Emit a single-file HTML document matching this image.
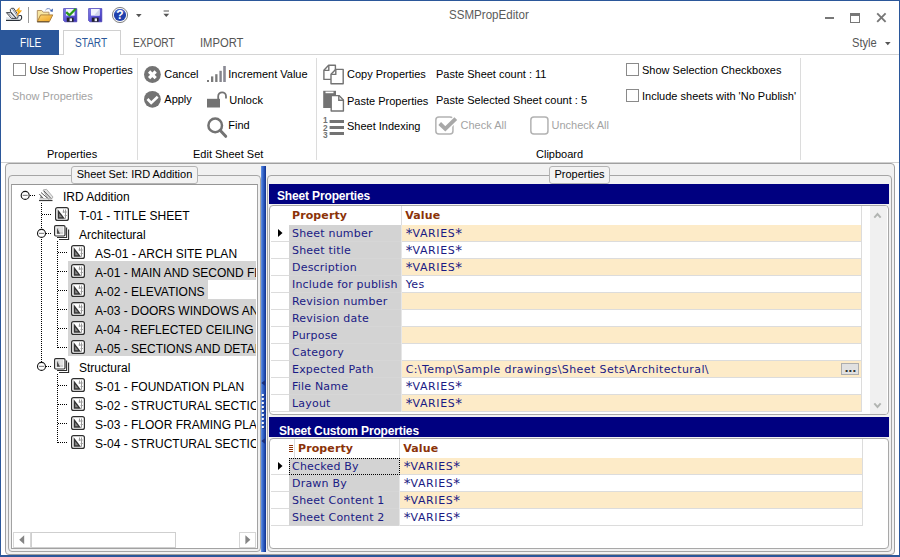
<!DOCTYPE html>
<html lang="en">
<head>
<meta charset="utf-8">
<title>SSMPropEditor</title>
<style>
*{box-sizing:border-box;margin:0;padding:0}
html,body{width:900px;height:557px;overflow:hidden;background:#fff}
body{position:relative;font-family:"Liberation Sans",Arial,sans-serif;font-size:11px;color:#000}
div,svg{position:absolute}
.as{font-size:13.5px;line-height:0;position:relative;top:1px;letter-spacing:0}
svg{overflow:visible}
#win{left:0;top:0;width:900px;height:557px;border:1px solid #2b579a;border-bottom-width:2px;pointer-events:none}
#tabline{left:1px;top:54px;width:898px;height:1px;background:#d4d4d4}
#filetab{left:0;top:30px;width:59px;height:25px;background:#2b579a}
#starttab{left:63px;top:30px;width:58px;height:25px;background:#fff;border:1px solid #d0d0d0;border-bottom:none}
.tabtxt{top:36px;font-size:12px;line-height:15px;color:#555;white-space:pre;transform-origin:0 0;transform:scaleX(.84)}
#ribline{left:1px;top:162px;width:898px;height:1px;background:#d0d0d0}
.sep{top:58px;width:1px;height:102px;background:#dcdcdc}
.rt{white-space:pre;font-size:11px;line-height:14px;height:14px;color:#000}
.dis{color:#a3a3a3}
.cb{width:13px;height:13px;border:1px solid #8a8a8a;background:#fff}
.gl{top:147px;font-size:11px;line-height:14px;white-space:pre}
/* lower */
#outer{left:5px;top:163px;width:890px;height:392px;border:1px solid #a0a0a0;border-radius:4px;background:#f1f1f1}
.grp{border:1px solid #a6a6a6;border-radius:4px;background:#f1f1f1}
.lbl{height:18px;top:166px;border:1px solid #b4b4b4;border-radius:3px;background:#f3f3f3;font-size:11px;line-height:14px;text-align:center;white-space:pre}
#tree{left:11px;top:184px;width:247px;height:365px;border:1px solid #a2a2a2;border-top-color:#969696;background:#fff;overflow:hidden}
.tr{left:0;height:19px;font-size:12px;line-height:19px;white-space:pre}
.hl{background:#d4d4d4;height:19px}
.navy{left:269px;width:620px;height:20px;background:#000080;color:#fff;font-weight:bold;font-size:12px;white-space:pre;letter-spacing:-.15px}
.grid{left:269px;width:620px;border:1px solid #a8a8a8;border-radius:4px;background:#fff;overflow:hidden}
.gt{font-family:"DejaVu Sans",Verdana,sans-serif;font-size:11px;line-height:17px;height:17px;white-space:pre;color:#1a1a84;letter-spacing:.2px}
.gv{letter-spacing:.4px}
.gv.va{letter-spacing:.62px}
.gh{font-family:"DejaVu Sans",Verdana,sans-serif;font-weight:bold;font-size:11px;line-height:17px;height:17px;white-space:pre;color:#8b3208;letter-spacing:.1px}
.pc{background:#d3d3d3}
.alt{background:#fdebc8}
.hline{height:1px;background:#dcdcdc}
.vline{width:1px;background:#dcdcdc}
</style>
</head>
<body>
<div id="tabline"></div><div id="ribline"></div>
<div id="filetab"></div><div id="starttab"></div>
<div class="tabtxt" style="left:20px;color:#fff">FILE</div>
<div class="tabtxt" style="left:75px;color:#2b579a">START</div>
<div class="tabtxt" style="left:133.3px;transform:scaleX(.85)">EXPORT</div>
<div class="tabtxt" style="left:200.2px;transform:scaleX(.935)">IMPORT</div>
<div class="tabtxt" style="left:852px;transform:scaleX(.93)">Style</div>
<div class="tabtxt" style="left:449px;top:8px;transform:scaleX(.965);color:#5a5a5a">SSMPropEditor</div>
<!-- app icon -->
<svg style="left:5px;top:6px" width="18" height="17" viewBox="5 6 18 17"><path d="M6 17.2H19.5V19.3H6Z" fill="#e1e6ee"/><path d="M6 20.4H19.2C21 20.2 21.9 18.6 21.6 16.8C21.4 15.5 20.2 15.2 19 15.7" fill="none" stroke="#2a3038" stroke-width="1.1"/><path d="M6.4 12.6H10.6L16 18.4H11.4Z" fill="#f4f6f9" stroke="#2a3038" stroke-width="0.9"/><path d="M8.2 12.8L13.4 18.3" stroke="#2a3038" stroke-width="0.8" stroke-dasharray="1 0.8"/><path d="M10.4 9.3L11.4 8.3H13.8L18.4 15.6L17.6 18.2H16.2L10.4 11.4Z" fill="#eef2f8" stroke="#2a3038" stroke-width="0.9"/><path d="M12.4 8.8L17.4 16.4" stroke="#6a7280" stroke-width="0.7"/><path d="M19.6 6.9L15.2 11.2L17.9 11.4L16.5 16.7L22.1 10.4L19.4 10.2Z" fill="#f4a01c"/><path d="M18.7 9.2L17.2 10.9L19.2 11.1L18.2 13.4L20.3 10.8L18.7 10.6Z" fill="#ffe020"/></svg>
<div style="left:28px;top:7px;width:1px;height:16px;background:#9a9a9a"></div>
<!-- open folder -->
<svg style="left:36px;top:7px" width="18" height="16" viewBox="0 0 18 16"><defs><linearGradient id="fg" x1="0" y1="0" x2="1" y2="1"><stop offset="0" stop-color="#fbd678"/><stop offset="1" stop-color="#f0a21c"/></linearGradient><linearGradient id="fl" x1="0" y1="0" x2="1" y2="1"><stop offset="0" stop-color="#8884ea"/><stop offset=".5" stop-color="#5f58da"/><stop offset="1" stop-color="#3c32b4"/></linearGradient></defs><path d="M1.3 14.4V3.5H5.8L7.2 5.2H13V8" fill="#f8e6a0" stroke="#b4946a" stroke-width="1"/><path d="M1.3 14.6L4.6 7.9H16.8L13.4 14.6Z" fill="url(#fg)" stroke="#a87a38" stroke-width="0.9" stroke-linejoin="round"/><path d="M1.2 14.9H13.2" stroke="#4a3a20" stroke-width="0.9"/><path d="M9.6 3C10.8 1.2 13.6 1 15.2 3.2" fill="none" stroke="#4a68b0" stroke-width="1" stroke-dasharray="1.4 0.6"/><path d="M17 1.6L16.6 5L13.6 4Z" fill="#3a5fb0"/></svg>
<!-- save + check -->
<svg style="left:63px;top:8px" width="15" height="15" viewBox="0 0 15 15"><path d="M0.6 0.6H13.8V13.8H1.8L0.6 12.6Z" fill="url(#fl)" stroke="#4038b0" stroke-width="0.7"/><rect x="3" y="1" width="8.6" height="6.6" fill="#f2f4fc"/><rect x="3.8" y="9.6" width="6.8" height="4.2" fill="#22222e"/><rect x="6.6" y="10.4" width="2.4" height="2.8" fill="#eeeef6"/><path d="M3.2 4.2L6.4 7.2L12.8 0.8" fill="none" stroke="#2a9a18" stroke-width="2.3"/></svg>
<!-- save -->
<svg style="left:88px;top:8px" width="15" height="15" viewBox="0 0 15 15"><path d="M0.6 0.6H13.8V13.8H1.8L0.6 12.6Z" fill="url(#fl)" stroke="#4038b0" stroke-width="0.7"/><rect x="3" y="1" width="8.6" height="6.6" fill="#f2f4fc"/><path d="M11.6 1V7.6H6Z" fill="#d0d6ec"/><rect x="3.8" y="9.6" width="6.8" height="4.2" fill="#22222e"/><rect x="6.6" y="10.4" width="2.4" height="2.8" fill="#eeeef6"/></svg>
<!-- help -->
<svg style="left:111px;top:6px" width="18" height="18" viewBox="0 0 18 18"><circle cx="9" cy="9" r="7.6" fill="#f6f6f6" stroke="#858585" stroke-width="1"/><circle cx="9" cy="9" r="6.1" fill="#2040ac"/><path d="M3.6 6.8A5.8 5.8 0 0 1 14.4 6.8A9 5 0 0 0 3.6 6.8Z" fill="#4a68cc"/><text x="9" y="13.4" font-family="Liberation Sans,sans-serif" font-size="12" font-weight="bold" fill="#fff" text-anchor="middle">?</text></svg>
<svg style="left:136px;top:14px" width="6" height="4" viewBox="0 0 6 4"><path d="M0 0H5.6L2.8 3.2Z" fill="#555"/></svg>
<svg style="left:163px;top:10px" width="7" height="8" viewBox="0 0 7 8"><path d="M0.6 1H6" stroke="#555" stroke-width="1"/><path d="M0.4 3.8H6.2L3.3 7Z" fill="#555"/></svg>

<div style="left:825px;top:17px;width:9px;height:2px;background:#777"></div>
<div style="left:850px;top:13px;width:10px;height:10px;border:1px solid #777;border-top-width:3px"></div>
<svg style="left:876px;top:12px" width="11" height="11" viewBox="0 0 11 11"><path d="M1.2 1.4L9.6 9.8M9.6 1.4L1.2 9.8" stroke="#777" stroke-width="1.9"/></svg>
<svg style="left:885px;top:42px" width="6" height="4" viewBox="0 0 6 4"><path d="M0 0H5.6L2.8 3.2Z" fill="#555"/></svg>

<div class="sep" style="left:137px"></div>
<div class="sep" style="left:316px"></div>
<div class="sep" style="left:800px"></div>
<div class="cb" style="left:13px;top:63px"></div>
<div class="rt " style="left:29.5px;top:63px">Use Show Properties</div>
<div class="rt dis" style="left:12px;top:89px">Show Properties</div>
<div class="rt " style="left:164.3px;top:67px">Cancel</div>
<div class="rt " style="left:164.3px;top:92px">Apply</div>
<div class="rt " style="left:228.3px;top:67px">Increment Value</div>
<div class="rt " style="left:229.3px;top:92.5px">Unlock</div>
<div class="rt " style="left:228.3px;top:118px">Find</div>
<div class="rt " style="left:347px;top:67px">Copy Properties</div>
<div class="rt " style="left:347px;top:93.5px">Paste Properties</div>
<div class="rt " style="left:347px;top:119px">Sheet Indexing</div>
<div class="rt " style="left:436px;top:67px">Paste Sheet count : 11</div>
<div class="rt " style="left:436px;top:93px">Paste Selected Sheet count : 5</div>
<div class="rt dis" style="left:460.5px;top:118px">Check All</div>
<div class="rt dis" style="left:551.5px;top:118px">Uncheck All</div>
<div class="cb" style="left:626px;top:63px"></div>
<div class="cb" style="left:626px;top:89px"></div>
<div class="rt " style="left:642px;top:63px">Show Selection Checkboxes</div>
<div class="rt " style="left:642px;top:89px">Include sheets with 'No Publish'</div>
<div class="gl" style="left:47px">Properties</div>
<div class="gl" style="left:193px">Edit Sheet Set</div>
<div class="gl" style="left:536px">Clipboard</div>
<!-- cancel -->
<svg style="left:144px;top:66px" width="17" height="17" viewBox="0 0 17 17"><circle cx="8.4" cy="8.5" r="8.4" fill="#737373"/><path d="M5.1 5.5L11.7 12.1M11.7 5.5L5.1 12.1" stroke="#fff" stroke-width="3.2"/></svg>
<!-- apply -->
<svg style="left:144px;top:91px" width="17" height="17" viewBox="0 0 17 17"><circle cx="8.4" cy="8.3" r="8.4" fill="#737373"/><path d="M3.5 8L7.2 12L13.7 5.8" fill="none" stroke="#fff" stroke-width="2.6" stroke-linejoin="miter"/></svg>
<!-- increment -->
<svg style="left:206px;top:65px" width="21" height="18" viewBox="0 0 21 18"><g fill="#7a7a7a"><rect x="1" y="15" width="2" height="2"/><rect x="5" y="11.4" width="2.3" height="5.6"/><rect x="9.2" y="9.2" width="2.3" height="7.8"/><rect x="13.4" y="5.8" width="2.4" height="11.2" fill="#84848c"/><rect x="17.2" y="1" width="2.6" height="16" fill="#8a8a94"/></g></svg>
<!-- unlock -->
<svg style="left:206px;top:90px" width="22" height="19" viewBox="0 0 22 19"><rect x="1" y="8.8" width="13" height="8.7" fill="#737373"/><path d="M12.2 9V6.2A3.9 3.9 0 0 1 20 6.2V8.6" fill="none" stroke="#737373" stroke-width="1.8"/></svg>
<!-- find -->
<svg style="left:206px;top:116px" width="22" height="20" viewBox="0 0 22 20"><circle cx="9.2" cy="9.4" r="6.8" fill="none" stroke="#737373" stroke-width="2.5"/><path d="M14.3 14.5L19.7 20.3" stroke="#737373" stroke-width="3" stroke-linecap="round"/></svg>
<!-- copy -->
<svg style="left:322px;top:63px" width="23" height="22" viewBox="0 0 23 22"><g fill="#fff" stroke="#737373" stroke-width="1.4" stroke-linejoin="round"><path d="M1.9 7.2L6.6 2.2H13.4V16.4H1.9Z"/><path d="M1.9 7.4H6.8V2.4" fill="none"/><path d="M9 11.2L13.6 6.4H21.2V20.7H9Z"/><path d="M9 11.4H13.8V6.6" fill="none"/></g></svg>
<!-- paste -->
<svg style="left:322px;top:89px" width="23" height="23" viewBox="0 0 23 23"><rect x="1.2" y="1.8" width="12.8" height="17.2" fill="#737373"/><rect x="3.5" y="2.6" width="8" height="1.6" fill="#fff"/><path d="M9.2 6.6H17L21.4 11V22H9.2Z" fill="#fff" stroke="#737373" stroke-width="1.4" stroke-linejoin="round"/><path d="M16.8 6.8V11.2H21.2" fill="none" stroke="#737373" stroke-width="1.4"/></svg>
<!-- indexing -->
<svg style="left:321px;top:116px" width="24" height="21" viewBox="0 0 24 21"><g fill="#737373"><rect x="8.6" y="4" width="14.4" height="3"/><rect x="8.6" y="10" width="14.4" height="3"/><rect x="8.6" y="16" width="14.4" height="3"/></g><g font-family="Liberation Sans,sans-serif" font-size="8.3" font-weight="bold" fill="#727272"><text x="2" y="6.8">1</text><text x="2" y="14.5">2</text><text x="2" y="21.8">3</text></g></svg>
<!-- check all -->
<svg style="left:434px;top:114px" width="26" height="22" viewBox="0 0 26 22"><rect x="1.85" y="2.95" width="17.1" height="17.1" rx="3" fill="#fff" stroke="#b2b2b2" stroke-width="1.5"/><path d="M13.5 12.7L21.8 4.6" fill="none" stroke="#fff" stroke-width="6.4"/><path d="M5.7 9.5L11.3 14.8L21.8 4.6" fill="none" stroke="#a8a8a8" stroke-width="3.9"/></svg>
<!-- uncheck all -->
<svg style="left:529px;top:114px" width="22" height="22" viewBox="0 0 22 22"><rect x="1.85" y="2.95" width="17.1" height="17.1" rx="3" fill="#fff" stroke="#b2b2b2" stroke-width="1.5"/></svg>

<div id="outer"></div>
<div class="grp" style="left:8px;top:175px;width:253px;height:377px"></div>
<div class="grp" style="left:267px;top:175px;width:625px;height:377px"></div>
<div class="lbl" style="left:71px;width:127px">Sheet Set: IRD Addition</div>
<div class="lbl" style="left:549px;width:61px">Properties</div>
<div style="left:261px;top:166px;width:5px;height:386px;background:linear-gradient(90deg,#6a98e4 0,#3f6fd0 30%,#2450b4 65%,#0f2f8c 100%)"></div>
<svg style="left:261px;top:379.8px" width="5" height="6" viewBox="0 0 5 6"><path d="M4 0.2V5.8L0.4 3Z" fill="#1c2f78"/></svg>
<svg style="left:261px;top:437.5px" width="5" height="6" viewBox="0 0 5 6"><path d="M4 0.2V5.8L0.4 3Z" fill="#1c2f78"/></svg>
<svg style="left:261px;top:392px" width="5" height="40" viewBox="0 0 5 40"><rect x="1.6" y="2.8" width="2" height="2" fill="#1c2f78"/><rect x="0.8" y="2" width="2" height="2" fill="#fff"/><rect x="1.6" y="6.8" width="2" height="2" fill="#1c2f78"/><rect x="0.8" y="6" width="2" height="2" fill="#fff"/><rect x="1.6" y="10.8" width="2" height="2" fill="#1c2f78"/><rect x="0.8" y="10" width="2" height="2" fill="#fff"/><rect x="1.6" y="14.8" width="2" height="2" fill="#1c2f78"/><rect x="0.8" y="14" width="2" height="2" fill="#fff"/><rect x="1.6" y="18.8" width="2" height="2" fill="#1c2f78"/><rect x="0.8" y="18" width="2" height="2" fill="#fff"/><rect x="1.6" y="22.8" width="2" height="2" fill="#1c2f78"/><rect x="0.8" y="22" width="2" height="2" fill="#fff"/><rect x="1.6" y="26.8" width="2" height="2" fill="#1c2f78"/><rect x="0.8" y="26" width="2" height="2" fill="#fff"/><rect x="1.6" y="30.8" width="2" height="2" fill="#1c2f78"/><rect x="0.8" y="30" width="2" height="2" fill="#fff"/><rect x="1.6" y="34.8" width="2" height="2" fill="#1c2f78"/><rect x="0.8" y="34" width="2" height="2" fill="#fff"/></svg>
<div id="tree">
<div class="tr" style="left:51px;top:3px">IRD Addition</div>
<div class="tr" style="left:67px;top:22px">T-01 - TITLE SHEET</div>
<div class="tr" style="left:67px;top:41px">Architectural</div>
<div class="tr" style="left:83px;top:60px">AS-01 - ARCH SITE PLAN</div>
<div class="hl" style="left:56px;top:76px;width:200px"></div>
<div class="tr" style="left:83px;top:79px">A-01 - MAIN AND SECOND FLOOR PLAN</div>
<div class="hl" style="left:56px;top:95px;width:140px"></div>
<div class="tr" style="left:83px;top:98px">A-02 - ELEVATIONS</div>
<div class="hl" style="left:56px;top:114px;width:200px"></div>
<div class="tr" style="left:83px;top:117px">A-03 - DOORS WINDOWS AND SCHEDULES</div>
<div class="hl" style="left:56px;top:133px;width:200px"></div>
<div class="tr" style="left:83px;top:136px">A-04 - REFLECTED CEILING PLAN</div>
<div class="hl" style="left:56px;top:152px;width:200px"></div>
<div class="tr" style="left:83px;top:155px">A-05 - SECTIONS AND DETAILS</div>
<div class="tr" style="left:67px;top:174px">Structural</div>
<div class="tr" style="left:83px;top:193px">S-01 - FOUNDATION PLAN</div>
<div class="tr" style="left:83px;top:212px">S-02 - STRUCTURAL SECTIONS</div>
<div class="tr" style="left:83px;top:231px">S-03 - FLOOR FRAMING PLAN</div>
<div class="tr" style="left:83px;top:250px">S-04 - STRUCTURAL SECTIONS 2</div>
<div style="left:244px;top:0;width:2px;height:346px;background:#fff"></div>
<svg style="left:0;top:0" width="246" height="362" viewBox="12 185 246 362">
<path d="M41.5 203V229" stroke="#000" stroke-width="1" stroke-dasharray="1 1" shape-rendering="crispEdges" fill="none"/>
<path d="M41.5 239V362" stroke="#000" stroke-width="1" stroke-dasharray="1 1" shape-rendering="crispEdges" fill="none"/>
<path d="M30 195.5H36" stroke="#000" stroke-width="1" stroke-dasharray="1 1" shape-rendering="crispEdges" fill="none"/>
<path d="M42 214.5H52" stroke="#000" stroke-width="1" stroke-dasharray="1 1" shape-rendering="crispEdges" fill="none"/>
<path d="M46 233.5H52" stroke="#000" stroke-width="1" stroke-dasharray="1 1" shape-rendering="crispEdges" fill="none"/>
<path d="M46 366.5H52" stroke="#000" stroke-width="1" stroke-dasharray="1 1" shape-rendering="crispEdges" fill="none"/>
<path d="M57.5 241V348.0" stroke="#000" stroke-width="1" stroke-dasharray="1 1" shape-rendering="crispEdges" fill="none"/>
<path d="M57.5 374.0V443.0" stroke="#000" stroke-width="1" stroke-dasharray="1 1" shape-rendering="crispEdges" fill="none"/>
<path d="M58 252.5H68" stroke="#000" stroke-width="1" stroke-dasharray="1 1" shape-rendering="crispEdges" fill="none"/>
<path d="M58 271.5H68" stroke="#000" stroke-width="1" stroke-dasharray="1 1" shape-rendering="crispEdges" fill="none"/>
<path d="M58 290.5H68" stroke="#000" stroke-width="1" stroke-dasharray="1 1" shape-rendering="crispEdges" fill="none"/>
<path d="M58 309.5H68" stroke="#000" stroke-width="1" stroke-dasharray="1 1" shape-rendering="crispEdges" fill="none"/>
<path d="M58 328.5H68" stroke="#000" stroke-width="1" stroke-dasharray="1 1" shape-rendering="crispEdges" fill="none"/>
<path d="M58 347.5H68" stroke="#000" stroke-width="1" stroke-dasharray="1 1" shape-rendering="crispEdges" fill="none"/>
<path d="M58 385.5H68" stroke="#000" stroke-width="1" stroke-dasharray="1 1" shape-rendering="crispEdges" fill="none"/>
<path d="M58 404.5H68" stroke="#000" stroke-width="1" stroke-dasharray="1 1" shape-rendering="crispEdges" fill="none"/>
<path d="M58 423.5H68" stroke="#000" stroke-width="1" stroke-dasharray="1 1" shape-rendering="crispEdges" fill="none"/>
<path d="M58 442.5H68" stroke="#000" stroke-width="1" stroke-dasharray="1 1" shape-rendering="crispEdges" fill="none"/>
<circle cx="25.2" cy="195.4" r="4" fill="#fff" stroke="#111" stroke-width="1.1"/>
<path d="M22.7 195.4H27.7" stroke="#8a8a8a" stroke-width="1.2"/>
<circle cx="41.5" cy="233.4" r="4" fill="#fff" stroke="#111" stroke-width="1.1"/>
<path d="M39.0 233.4H44.0" stroke="#8a8a8a" stroke-width="1.2"/>
<circle cx="41.5" cy="366.4" r="4" fill="#fff" stroke="#111" stroke-width="1.1"/>
<path d="M39.0 366.4H44.0" stroke="#8a8a8a" stroke-width="1.2"/>
<rect x="55.6" y="207.6" width="12.8" height="12.8" rx="2" fill="#fff" stroke="#2e2e2e" stroke-width="1.2"/>
<path d="M57.7 209.2V218.7H65Z" fill="#343434"/>
<path d="M59.2 213.6V217.3H62.2Z" fill="#8a8a8a"/>
<path d="M62.6 212H66.8M64.6 215.5H66.8M65.5 209.5V218.7M63.5 209.5V212.8" stroke="#9a9a9a" stroke-width="1" fill="none"/>
<rect x="71.6" y="245.6" width="12.8" height="12.8" rx="2" fill="#fff" stroke="#2e2e2e" stroke-width="1.2"/>
<path d="M73.7 247.2V256.7H81Z" fill="#343434"/>
<path d="M75.2 251.6V255.3H78.2Z" fill="#8a8a8a"/>
<path d="M78.6 250.0H82.8M80.6 253.5H82.8M81.5 247.5V256.7M79.5 247.5V250.8" stroke="#9a9a9a" stroke-width="1" fill="none"/>
<rect x="71.6" y="264.6" width="12.8" height="12.8" rx="2" fill="#fff" stroke="#2e2e2e" stroke-width="1.2"/>
<path d="M73.7 266.2V275.7H81Z" fill="#343434"/>
<path d="M75.2 270.6V274.3H78.2Z" fill="#8a8a8a"/>
<path d="M78.6 269.0H82.8M80.6 272.5H82.8M81.5 266.5V275.7M79.5 266.5V269.8" stroke="#9a9a9a" stroke-width="1" fill="none"/>
<rect x="71.6" y="283.6" width="12.8" height="12.8" rx="2" fill="#fff" stroke="#2e2e2e" stroke-width="1.2"/>
<path d="M73.7 285.2V294.7H81Z" fill="#343434"/>
<path d="M75.2 289.6V293.3H78.2Z" fill="#8a8a8a"/>
<path d="M78.6 288.0H82.8M80.6 291.5H82.8M81.5 285.5V294.7M79.5 285.5V288.8" stroke="#9a9a9a" stroke-width="1" fill="none"/>
<rect x="71.6" y="302.6" width="12.8" height="12.8" rx="2" fill="#fff" stroke="#2e2e2e" stroke-width="1.2"/>
<path d="M73.7 304.2V313.7H81Z" fill="#343434"/>
<path d="M75.2 308.6V312.3H78.2Z" fill="#8a8a8a"/>
<path d="M78.6 307.0H82.8M80.6 310.5H82.8M81.5 304.5V313.7M79.5 304.5V307.8" stroke="#9a9a9a" stroke-width="1" fill="none"/>
<rect x="71.6" y="321.6" width="12.8" height="12.8" rx="2" fill="#fff" stroke="#2e2e2e" stroke-width="1.2"/>
<path d="M73.7 323.2V332.7H81Z" fill="#343434"/>
<path d="M75.2 327.6V331.3H78.2Z" fill="#8a8a8a"/>
<path d="M78.6 326.0H82.8M80.6 329.5H82.8M81.5 323.5V332.7M79.5 323.5V326.8" stroke="#9a9a9a" stroke-width="1" fill="none"/>
<rect x="71.6" y="340.6" width="12.8" height="12.8" rx="2" fill="#fff" stroke="#2e2e2e" stroke-width="1.2"/>
<path d="M73.7 342.2V351.7H81Z" fill="#343434"/>
<path d="M75.2 346.6V350.3H78.2Z" fill="#8a8a8a"/>
<path d="M78.6 345.0H82.8M80.6 348.5H82.8M81.5 342.5V351.7M79.5 342.5V345.8" stroke="#9a9a9a" stroke-width="1" fill="none"/>
<rect x="71.6" y="378.6" width="12.8" height="12.8" rx="2" fill="#fff" stroke="#2e2e2e" stroke-width="1.2"/>
<path d="M73.7 380.2V389.7H81Z" fill="#343434"/>
<path d="M75.2 384.6V388.3H78.2Z" fill="#8a8a8a"/>
<path d="M78.6 383.0H82.8M80.6 386.5H82.8M81.5 380.5V389.7M79.5 380.5V383.8" stroke="#9a9a9a" stroke-width="1" fill="none"/>
<rect x="71.6" y="397.6" width="12.8" height="12.8" rx="2" fill="#fff" stroke="#2e2e2e" stroke-width="1.2"/>
<path d="M73.7 399.2V408.7H81Z" fill="#343434"/>
<path d="M75.2 403.6V407.3H78.2Z" fill="#8a8a8a"/>
<path d="M78.6 402.0H82.8M80.6 405.5H82.8M81.5 399.5V408.7M79.5 399.5V402.8" stroke="#9a9a9a" stroke-width="1" fill="none"/>
<rect x="71.6" y="416.6" width="12.8" height="12.8" rx="2" fill="#fff" stroke="#2e2e2e" stroke-width="1.2"/>
<path d="M73.7 418.2V427.7H81Z" fill="#343434"/>
<path d="M75.2 422.6V426.3H78.2Z" fill="#8a8a8a"/>
<path d="M78.6 421.0H82.8M80.6 424.5H82.8M81.5 418.5V427.7M79.5 418.5V421.8" stroke="#9a9a9a" stroke-width="1" fill="none"/>
<rect x="71.6" y="435.6" width="12.8" height="12.8" rx="2" fill="#fff" stroke="#2e2e2e" stroke-width="1.2"/>
<path d="M73.7 437.2V446.7H81Z" fill="#343434"/>
<path d="M75.2 441.6V445.3H78.2Z" fill="#8a8a8a"/>
<path d="M78.6 440.0H82.8M80.6 443.5H82.8M81.5 437.5V446.7M79.5 437.5V440.8" stroke="#9a9a9a" stroke-width="1" fill="none"/>
<path d="M59 239.5H68.6V229.5" fill="none" stroke="#2e2e2e" stroke-width="1.1"/>
<path d="M57 237.5H66.6V227.5" fill="none" stroke="#2e2e2e" stroke-width="1.1"/>
<rect x="54.6" y="225.6" width="10.4" height="10.4" rx="1.2" fill="#fff" stroke="#2e2e2e" stroke-width="1.2"/>
<rect x="56.4" y="227.4" width="6.8" height="6.8" fill="#d0d0d0"/>
<path d="M57 228V233.8H60Z" fill="#4a4a4a"/>
<path d="M59 229H63M59.5 231H63" stroke="#f4f4f4" stroke-width="1"/>
<path d="M59 372.5H68.6V362.5" fill="none" stroke="#2e2e2e" stroke-width="1.1"/>
<path d="M57 370.5H66.6V360.5" fill="none" stroke="#2e2e2e" stroke-width="1.1"/>
<rect x="54.6" y="358.6" width="10.4" height="10.4" rx="1.2" fill="#fff" stroke="#2e2e2e" stroke-width="1.2"/>
<rect x="56.4" y="360.4" width="6.8" height="6.8" fill="#d0d0d0"/>
<path d="M57 361V366.8H60Z" fill="#4a4a4a"/>
<path d="M59 362H63M59.5 364H63" stroke="#f4f4f4" stroke-width="1"/>
<path d="M39 200.5H52.5" stroke="#3a3a3a" stroke-width="1.2"/>
<path d="M43 190L46.5 189.3L53 197L51.5 199L48 198.8Z" fill="#e4e4e4" stroke="#a0a0a0" stroke-width="0.8"/>
<path d="M39.3 194L43.5 198.5M41 192.5L48.5 199M44 191L51 198.5" stroke="#5a5a5a" stroke-width="1" fill="none"/>
<path d="M39.5 198.8H51" stroke="#bdbdbd" stroke-width="1"/>
<path d="M41 195.5L43 198L40 197.8Z" fill="#707070"/>
</svg>
<div style="left:1px;top:347px;width:18px;height:16px;background:#fff;border:1px solid #d6d6d6"></div>
<div style="left:19px;top:347px;width:145px;height:16px;background:#fff;border:1px solid #cfcfcf"></div>
<div style="left:227px;top:347px;width:17px;height:16px;background:#fff;border:1px solid #d6d6d6"></div>
<svg style="left:7px;top:350px" width="6" height="10"><path d="M5.2 0.3V9.3L0.2 4.8Z" fill="#858585"/></svg>
<svg style="left:233px;top:350px" width="6" height="10"><path d="M0.4 0.3V9.3L5.4 4.8Z" fill="#858585"/></svg>
</div>
<div class="navy" style="top:184px;line-height:24px;padding-left:8px">Sheet Properties</div>
<div class="navy" style="top:417px;line-height:28px;padding-left:10px">Sheet Custom Properties</div>
<div class="grid" style="top:205px;height:210px">
<div class="gh" style="left:22px;top:1px">Property</div>
<div class="gh" style="left:135.3px;top:1px">Value</div>
<div class="vline" style="left:131px;top:0;height:19px"></div>
<div class="alt" style="left:132px;top:19px;width:459px;height:16px"></div>
<div class="hline" style="left:1px;top:35px;width:591px"></div>
<div class="pc" style="left:19px;top:19px;width:112px;height:17px;border-bottom:1px solid #d6d6d6"></div>
<div class="gt" style="left:22px;top:19px">Sheet number</div>
<div class="gt gv va" style="left:135.7px;top:19px"><span class="as">*</span>VARIES<span class="as">*</span></div>
<div class="hline" style="left:1px;top:52px;width:591px"></div>
<div class="pc" style="left:19px;top:36px;width:112px;height:17px;border-bottom:1px solid #d6d6d6"></div>
<div class="gt" style="left:22px;top:36px">Sheet title</div>
<div class="gt gv va" style="left:135.7px;top:36px"><span class="as">*</span>VARIES<span class="as">*</span></div>
<div class="alt" style="left:132px;top:53px;width:459px;height:16px"></div>
<div class="hline" style="left:1px;top:69px;width:591px"></div>
<div class="pc" style="left:19px;top:53px;width:112px;height:17px;border-bottom:1px solid #d6d6d6"></div>
<div class="gt" style="left:22px;top:53px">Description</div>
<div class="gt gv va" style="left:135.7px;top:53px"><span class="as">*</span>VARIES<span class="as">*</span></div>
<div class="hline" style="left:1px;top:86px;width:591px"></div>
<div class="pc" style="left:19px;top:70px;width:112px;height:17px;border-bottom:1px solid #d6d6d6"></div>
<div class="gt" style="left:22px;top:70px">Include for publish</div>
<div class="gt gv" style="left:135.7px;top:70px">Yes</div>
<div class="alt" style="left:132px;top:87px;width:459px;height:16px"></div>
<div class="hline" style="left:1px;top:103px;width:591px"></div>
<div class="pc" style="left:19px;top:87px;width:112px;height:17px;border-bottom:1px solid #d6d6d6"></div>
<div class="gt" style="left:22px;top:87px">Revision number</div>
<div class="hline" style="left:1px;top:120px;width:591px"></div>
<div class="pc" style="left:19px;top:104px;width:112px;height:17px;border-bottom:1px solid #d6d6d6"></div>
<div class="gt" style="left:22px;top:104px">Revision date</div>
<div class="alt" style="left:132px;top:121px;width:459px;height:16px"></div>
<div class="hline" style="left:1px;top:137px;width:591px"></div>
<div class="pc" style="left:19px;top:121px;width:112px;height:17px;border-bottom:1px solid #d6d6d6"></div>
<div class="gt" style="left:22px;top:121px">Purpose</div>
<div class="hline" style="left:1px;top:154px;width:591px"></div>
<div class="pc" style="left:19px;top:138px;width:112px;height:17px;border-bottom:1px solid #d6d6d6"></div>
<div class="gt" style="left:22px;top:138px">Category</div>
<div class="alt" style="left:132px;top:155px;width:459px;height:16px"></div>
<div class="hline" style="left:1px;top:171px;width:591px"></div>
<div class="pc" style="left:19px;top:155px;width:112px;height:17px;border-bottom:1px solid #d6d6d6"></div>
<div class="gt" style="left:22px;top:155px">Expected Path</div>
<div class="gt gv" style="left:135.7px;top:155px">C:\Temp\Sample drawings\Sheet Sets\Architectural\</div>
<div class="hline" style="left:1px;top:188px;width:591px"></div>
<div class="pc" style="left:19px;top:172px;width:112px;height:17px;border-bottom:1px solid #d6d6d6"></div>
<div class="gt" style="left:22px;top:172px">File Name</div>
<div class="gt gv va" style="left:135.7px;top:172px"><span class="as">*</span>VARIES<span class="as">*</span></div>
<div class="alt" style="left:132px;top:189px;width:459px;height:16px"></div>
<div class="hline" style="left:1px;top:205px;width:591px"></div>
<div class="pc" style="left:19px;top:189px;width:112px;height:17px;border-bottom:1px solid #d6d6d6"></div>
<div class="gt" style="left:22px;top:189px">Layout</div>
<div class="gt gv va" style="left:135.7px;top:189px"><span class="as">*</span>VARIES<span class="as">*</span></div>
<div class="vline" style="left:591px;top:0;height:206px"></div>
<div class="vline" style="left:131px;top:19px;height:187px;background:#e6e6e6"></div>
<svg style="left:8px;top:23px" width="5" height="8"><path d="M0 0V8L4.5 4Z" fill="#000"/></svg>
<div style="left:600px;top:0;width:17px;height:208px;background:#f0f0f0"></div>
<svg style="left:603.3px;top:6.3px" width="9" height="7"><path d="M1.3 5.6L4.5 2L7.7 5.6" fill="none" stroke="#b2b5b2" stroke-width="1.9"/></svg>
<svg style="left:603.3px;top:196.4px" width="9" height="7"><path d="M1.3 1.4L4.5 5L7.7 1.4" fill="none" stroke="#b2b5b2" stroke-width="1.9"/></svg>
<div style="left:571px;top:157px;width:18px;height:12px;background:#e1e1e1;border:1px solid #adadad"></div>
<div class="gt" style="left:574.6px;top:154px;font-size:11px;font-weight:bold;letter-spacing:-.4px;color:#333">...</div>
</div>
<div class="grid" style="top:438px;height:111px">
<div class="gh" style="left:28px;top:1px">Property</div>
<div class="gh" style="left:133.3px;top:1px">Value</div>
<div class="vline" style="left:129px;top:0;height:19px"></div>
<div class="vline" style="left:24px;top:0;height:19px"></div>
<div class="alt" style="left:130px;top:19px;width:462px;height:16px"></div>
<div class="hline" style="left:1px;top:35px;width:592px"></div>
<div class="pc" style="left:19px;top:19px;width:110px;height:17px;border-bottom:1px solid #d6d6d6"></div>
<div class="gt" style="left:22px;top:19px">Checked By</div>
<div class="gt gv va" style="left:133.7px;top:19px"><span class="as">*</span>VARIES<span class="as">*</span></div>
<div class="hline" style="left:1px;top:52px;width:592px"></div>
<div class="pc" style="left:19px;top:36px;width:110px;height:17px;border-bottom:1px solid #d6d6d6"></div>
<div class="gt" style="left:22px;top:36px">Drawn By</div>
<div class="gt gv va" style="left:133.7px;top:36px"><span class="as">*</span>VARIES<span class="as">*</span></div>
<div class="alt" style="left:130px;top:53px;width:462px;height:16px"></div>
<div class="hline" style="left:1px;top:69px;width:592px"></div>
<div class="pc" style="left:19px;top:53px;width:110px;height:17px;border-bottom:1px solid #d6d6d6"></div>
<div class="gt" style="left:22px;top:53px">Sheet Content 1</div>
<div class="gt gv va" style="left:133.7px;top:53px"><span class="as">*</span>VARIES<span class="as">*</span></div>
<div class="hline" style="left:1px;top:86px;width:592px"></div>
<div class="pc" style="left:19px;top:70px;width:110px;height:17px;border-bottom:1px solid #d6d6d6"></div>
<div class="gt" style="left:22px;top:70px">Sheet Content 2</div>
<div class="gt gv va" style="left:133.7px;top:70px"><span class="as">*</span>VARIES<span class="as">*</span></div>
<div class="vline" style="left:592px;top:0;height:87px"></div>
<div class="vline" style="left:129px;top:19px;height:68px;background:#e6e6e6"></div>
<svg style="left:8px;top:23px" width="5" height="8"><path d="M0 0V8L4.5 4Z" fill="#000"/></svg>
<div style="left:19px;top:19px;width:111px;height:17px;border:1px dotted #000"></div>
<svg style="left:19px;top:5px" width="5" height="10" viewBox="0 0 5 10" shape-rendering="crispEdges"><path d="M0 1.5H4M0 3.5H4M0 5.5H4M0 7.5H4" stroke="#8b3208" stroke-width="1"/></svg>

</div>
<div id="win"></div>
</body>
</html>
